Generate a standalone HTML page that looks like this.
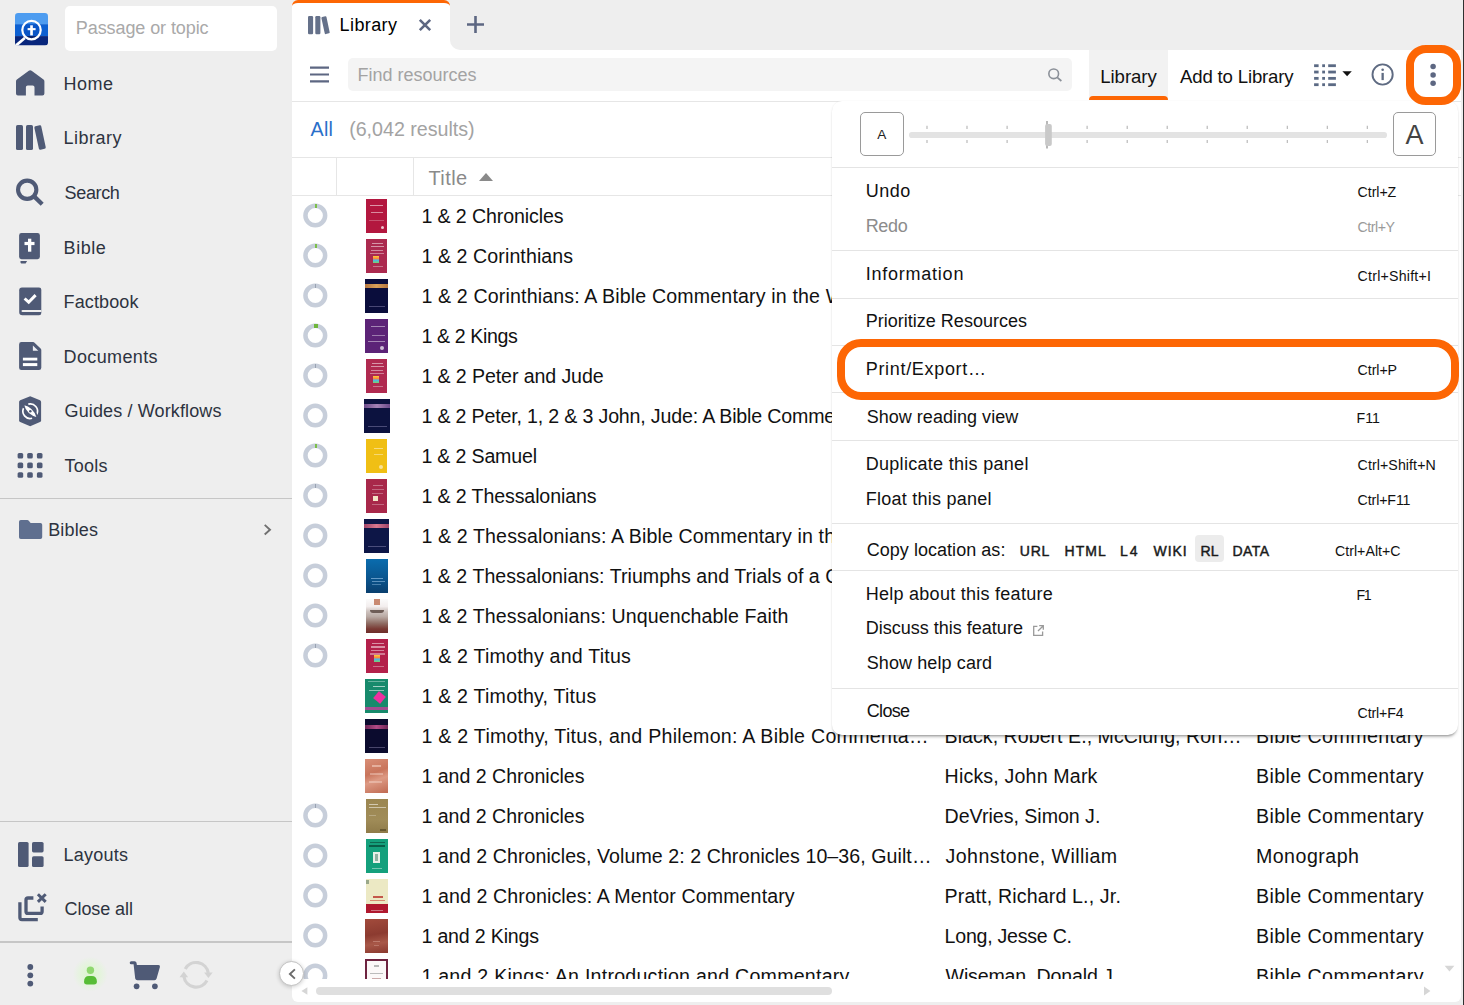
<!DOCTYPE html>
<html lang="en"><head><meta charset="utf-8"><title>Library</title>
<style>
html,body{margin:0;padding:0;}
body{width:1464px;height:1005px;overflow:hidden;background:#eeeeee;font-family:"Liberation Sans",sans-serif;position:relative;}
.a{position:absolute;}
.t{position:absolute;line-height:1;white-space:nowrap;}
svg{position:absolute;overflow:visible;}
.sep{position:absolute;height:1px;background:#e4e4e4;}
.ring{position:absolute;width:15.6px;height:15.6px;border:4.3px solid #c8cfda;border-radius:50%;}
.cv{position:absolute;overflow:hidden;}
.cv i{filter:blur(0.45px);}
</style></head><body>
<div class="a" id="sidebar" style="left:0;top:0;width:292px;height:1005px;background:#eeeeee"></div>
<svg style="left:15.1px;top:12.9px" width="33" height="32.4" viewBox="0 0 33 32.4">
<defs><clipPath id="lg"><rect x="0" y="0" width="33" height="32.4" rx="3.2"/></clipPath><clipPath id="lc"><circle cx="16.5" cy="17.1" r="9.2"/></clipPath></defs>
<g clip-path="url(#lg)">
<rect x="0" y="0" width="33" height="11.4" fill="#4d9cf0"/>
<rect x="0" y="11.2" width="33" height="12" fill="#0c60d2"/>
<rect x="0" y="23.1" width="33" height="9.4" fill="#08267c"/>
<g clip-path="url(#lc)"><rect x="0" y="0" width="33" height="11.4" fill="#2f82e2"/><rect x="0" y="11.2" width="33" height="12" fill="#0a55c6"/><rect x="0" y="23.1" width="33" height="9.4" fill="#061f6a"/></g>
<line x1="1.2" y1="32.4" x2="9.8" y2="24.9" stroke="#fff" stroke-width="2.7"/>
</g>
<circle cx="16.5" cy="17.1" r="9.2" fill="none" stroke="#fff" stroke-width="2.2"/>
<rect x="15.2" y="12.3" width="2.65" height="10.1" fill="#fff"/><rect x="12.6" y="15.1" width="8" height="2.1" fill="#fff"/>
</svg>
<div class="a" style="left:65px;top:6px;width:212px;height:45px;background:#fff;border-radius:5px"></div>
<span id="t0" class="t " style="left:75.80px;top:18.96px;font-size:18.00px;color:#a9a9a9;letter-spacing:-0.085px;">Passage or topic</span>
<span id="t1" class="t " style="left:63.60px;top:74.86px;font-size:18.00px;color:#2d3340;letter-spacing:0.499px;">Home</span>
<span id="t2" class="t " style="left:63.60px;top:129.42px;font-size:18.00px;color:#2d3340;letter-spacing:0.497px;">Library</span>
<span id="t3" class="t " style="left:64.60px;top:183.98px;font-size:18.00px;color:#2d3340;letter-spacing:-0.364px;">Search</span>
<span id="t4" class="t " style="left:63.60px;top:238.54px;font-size:18.00px;color:#2d3340;letter-spacing:0.546px;">Bible</span>
<span id="t5" class="t " style="left:63.60px;top:293.10px;font-size:18.00px;color:#2d3340;letter-spacing:0.109px;">Factbook</span>
<span id="t6" class="t " style="left:63.60px;top:347.66px;font-size:18.00px;color:#2d3340;letter-spacing:0.358px;">Documents</span>
<span id="t7" class="t " style="left:64.60px;top:402.22px;font-size:18.00px;color:#2d3340;letter-spacing:0.123px;">Guides / Workflows</span>
<span id="t8" class="t " style="left:64.60px;top:456.78px;font-size:18.00px;color:#2d3340;letter-spacing:0.245px;">Tools</span>
<svg style="left:16px;top:69px" width="29" height="27" viewBox="0 0 29 27"><path fill="#4f5a76" d="M15.6 1.7 L27.5 10.5 Q28.4 11.2 28.4 12.4 V24.6 Q28.4 26.6 26.4 26.6 H18.5 V18.2 Q18.5 16.4 16.7 16.4 H11.7 Q9.9 16.4 9.9 18.2 V26.6 H2 Q0 26.6 0 24.6 V12.4 Q0 11.2 0.9 10.5 L12.8 1.7 Q14.2 0.7 15.6 1.7 Z"/></svg>
<svg style="left:16px;top:125px" width="30.0" height="25.0" viewBox="0 0 30 25"><g fill="#4f5a76"><rect x="0" y="0" width="7" height="25" rx="1.6"/><rect x="10" y="0" width="7" height="25" rx="1.6"/><path d="M19.4 1.3 L23.6 0.3 Q25 0 25.3 1.4 L29.7 22.1 Q30 23.5 28.6 23.8 L24.6 24.8 Q23.2 25.1 22.9 23.7 L18.4 3 Q18.1 1.6 19.4 1.3 Z"/></g></svg>
<svg style="left:16px;top:178px" width="30" height="29" viewBox="0 0 30 29"><circle cx="11.2" cy="11.75" r="9.15" fill="none" stroke="#4f5a76" stroke-width="4.1"/><line x1="17.6" y1="17.9" x2="26.2" y2="26.3" stroke="#4f5a76" stroke-width="4.3"/></svg>
<svg style="left:19px;top:233px" width="21" height="31" viewBox="0 0 21 31"><rect x="0.1" y="0" width="20.8" height="26.2" rx="2.4" fill="#4f5a76"/><path d="M1.5 27.9 H8.1 L6.6 30.4 H2.3 Q1.5 30.4 1.5 29.6 Z" fill="#4f5a76"/><rect x="9" y="5.7" width="3.3" height="13" fill="#fff"/><rect x="5.5" y="8.9" width="10" height="3.2" fill="#fff"/></svg>
<svg style="left:19px;top:287px" width="23" height="29" viewBox="0 0 23 29"><path fill="#4f5a76" d="M3 0.4 H20 Q22.3 0.4 22.3 2.7 V26 Q22.3 28.3 20 28.3 H3.4 Q0.2 28.3 0.2 25.1 V3.2 Q0.2 0.4 3 0.4 Z"/><path d="M3.6 22.9 H22.3 V25.1 H3.6 Q2.5 25.1 2.5 24 Q2.5 22.9 3.6 22.9 Z" fill="#eee"/><path d="M5.6 11.5 L9.7 15.2 L16.6 8.1" fill="none" stroke="#fff" stroke-width="3"/></svg>
<svg style="left:19px;top:342px" width="23" height="29" viewBox="0 0 23 29"><path fill="#4f5a76" d="M2.4 0.1 H14 Q15 0.1 15.8 0.9 L21.6 6.4 Q22.3 7.1 22.3 8.1 V25.8 Q22.3 28.1 20 28.1 H2.4 Q0.1 28.1 0.1 25.8 V2.4 Q0.1 0.1 2.4 0.1 Z"/><path d="M13.9 3.6 V8.7 H19.3 Z" fill="#eceef3"/><rect x="3.9" y="15.7" width="14.4" height="2.8" fill="#fff"/><rect x="3.9" y="21.1" width="14.4" height="3" fill="#fff"/></svg>
<svg style="left:19px;top:395.5px" width="23" height="30.5" viewBox="0 0 23 30.5"><path fill="#4f5a76" d="M11.2 0.3 L21 4.3 Q22.1 4.8 22.1 6 V24.4 Q22.1 25.6 21 26.1 L11.2 30.3 L1.2 26.1 Q0.1 25.6 0.1 24.4 V6 Q0.1 4.8 1.2 4.3 Z"/>
<path d="M9.31 8.15 A7.3 7.3 0 0 1 17.82 18.29" fill="none" stroke="#fff" stroke-width="1.7"/>
<path d="M13.09 22.25 A7.3 7.3 0 0 1 4.58 12.11" fill="none" stroke="#fff" stroke-width="1.7"/>
<path d="M4 8 Q15.8 10.7 18.7 22.3 Q6.9 19.6 4 8 Z" fill="#fff" stroke="#4f5a76" stroke-width="1.5"/><circle cx="11.3" cy="15.2" r="1.25" fill="#4f5a76"/></svg>
<svg style="left:0;top:0" width="60" height="500" viewBox="0 0 60 500"><g fill="#4f5a76"><rect x="17.6" y="452.9" width="5.6" height="5.6" rx="1.5"/><rect x="17.6" y="462.6" width="5.6" height="5.6" rx="1.5"/><rect x="17.6" y="472.2" width="5.6" height="5.6" rx="1.5"/><rect x="27.2" y="452.9" width="5.6" height="5.6" rx="1.5"/><rect x="27.2" y="462.6" width="5.6" height="5.6" rx="1.5"/><rect x="27.2" y="472.2" width="5.6" height="5.6" rx="1.5"/><rect x="36.9" y="452.9" width="5.6" height="5.6" rx="1.5"/><rect x="36.9" y="462.6" width="5.6" height="5.6" rx="1.5"/><rect x="36.9" y="472.2" width="5.6" height="5.6" rx="1.5"/></g></svg>
<div class="a" style="left:0;top:497.8px;width:292px;height:1.4px;background:#c6c6c6"></div>
<svg style="left:19px;top:520px" width="24" height="19" viewBox="0 0 24 19"><path fill="#5f6f8f" d="M1.8 0 H8.2 Q9.3 0 10 0.9 L11.6 3 H21.4 Q23.2 3 23.2 4.8 V17.2 Q23.2 19 21.4 19 H1.8 Q0 19 0 17.2 V1.8 Q0 0 1.8 0 Z"/></svg>
<span id="t9" class="t " style="left:48.20px;top:521.06px;font-size:18.00px;color:#2d3340;letter-spacing:0.155px;">Bibles</span>
<svg style="left:262px;top:523px" width="10" height="13" viewBox="0 0 10 13"><path d="M2.7 1.9 L8 6.7 L2.7 11.5" fill="none" stroke="#707070" stroke-width="1.9"/></svg>
<div class="a" style="left:0;top:821px;width:292px;height:1px;background:#c6c6c6"></div>
<div class="a" style="left:0;top:941px;width:292px;height:2px;background:#c6c6c6"></div>
<svg style="left:17.6px;top:842.2px" width="26" height="25" viewBox="0 0 26 25"><g fill="#4f5a76"><rect x="0" y="0" width="10.6" height="25" rx="1.6"/><rect x="14" y="0" width="11.6" height="10.4" rx="1.6"/><rect x="14" y="14.2" width="11.6" height="10.8" rx="1.6"/></g></svg>
<span id="t10" class="t " style="left:63.60px;top:845.76px;font-size:18.00px;color:#2d3340;letter-spacing:0.226px;">Layouts</span>
<svg style="left:17.6px;top:893px" width="30" height="30" viewBox="0 0 30 30"><g fill="none" stroke="#4f5a76" stroke-width="3.3">
<path d="M1.9 9.2 V24.6 Q1.9 26.6 3.9 26.6 H19.8"/><path d="M15.4 5 H10 Q8 5 8 7 V18.4 Q8 20.4 10 20.4 H22.1 Q24.1 20.4 24.1 18.4 V13.6"/>
<path d="M19.9 1.3 L27.7 8.9 M27.7 1.3 L19.9 8.9" stroke-width="3"/></g></svg>
<span id="t11" class="t " style="left:64.60px;top:900.36px;font-size:18.00px;color:#2d3340;letter-spacing:-0.091px;">Close all</span>
<svg style="left:0;top:950px" width="292" height="50" viewBox="0 950 292 50">
<defs><radialGradient id="gl"><stop offset="0" stop-color="#dcf5cf"/><stop offset="0.55" stop-color="#e4f4dc"/><stop offset="1" stop-color="#eeeeee"/></radialGradient></defs>
<g fill="#4f5a76"><circle cx="30.3" cy="967" r="2.9"/><circle cx="30.3" cy="975.3" r="2.9"/><circle cx="30.3" cy="983.6" r="2.9"/></g>
<circle cx="90.4" cy="974.2" r="17.5" fill="url(#gl)"/>
<circle cx="90.4" cy="970.3" r="3.7" fill="#8fd86f"/>
<path d="M84 981.8 Q84 976.1 89 976.1 H91.8 Q96.9 976.1 96.9 981.8 Q96.9 984.5 94 984.5 H86.9 Q84 984.5 84 981.8 Z" fill="#57bd36"/>
<g fill="#4f5a76"><path d="M129.7 962.7 Q129.7 961.2 131.2 961.2 H134.6 Q136.2 961.2 136.5 962.8 L136.9 965.1 H158.4 Q160.4 965.1 159.9 967 L156.6 978.6 Q156.1 980.2 154.5 980.2 H137.4 Q135.6 980.2 135.2 978.4 L133.6 964.2 H131.2 Q129.7 964.2 129.7 962.7 Z"/>
<circle cx="136.6" cy="986.3" r="2.85"/><circle cx="154.9" cy="986.3" r="2.85"/></g>
<g fill="none" stroke="#d3d3d3" stroke-width="3.2"><path d="M185.24 969.03 A12.3 12.3 0 0 1 208.28 973.09"/><path d="M206.96 980.57 A12.3 12.3 0 0 1 183.92 976.51"/></g>
<path d="M204.10 972.40 l8.6 0 l-4.3 5.6 Z" fill="#d3d3d3"/><path d="M188.10 977.20 l-8.6 0 l4.3 -5.6 Z" fill="#d3d3d3"/>
</svg>
<div class="a" id="panel" style="left:292px;top:0;width:1169px;height:1001.5px;background:#fff;border-radius:0 0 6px 6px"></div>
<div class="a" style="left:450px;top:0;width:1014px;height:49.7px;background:#eeeeee;border-bottom-left-radius:10px"></div>
<div class="a" style="left:292px;top:0;width:158px;height:12px;background:#eeeeee"></div>
<div class="a" style="left:292px;top:0;width:157.6px;height:45px;background:#fff;border-top:3.8px solid #fd6604;border-radius:6px 6px 0 0"></div>
<svg style="left:307.8px;top:16.2px" width="21.9" height="18.25" viewBox="0 0 30 25"><g fill="#65718a"><rect x="0" y="0" width="7" height="25" rx="1.6"/><rect x="10" y="0" width="7" height="25" rx="1.6"/><path d="M19.4 1.3 L23.6 0.3 Q25 0 25.3 1.4 L29.7 22.1 Q30 23.5 28.6 23.8 L24.6 24.8 Q23.2 25.1 22.9 23.7 L18.4 3 Q18.1 1.6 19.4 1.3 Z"/></g></svg>
<span id="t12" class="t " style="left:339.60px;top:16.16px;font-size:18.00px;color:#000;letter-spacing:0.397px;">Library</span>
<svg style="left:419px;top:18.8px" width="12" height="12" viewBox="0 0 12 12"><path d="M0.8 0.8 L11.2 11.2 M11.2 0.8 L0.8 11.2" stroke="#5d6782" stroke-width="2.6"/></svg>
<svg style="left:467px;top:16.1px" width="17" height="17" viewBox="0 0 17 17"><path d="M8.5 0 V17 M0 8.5 H17" stroke="#5d6782" stroke-width="2.6"/></svg>
<svg style="left:310px;top:66px" width="19" height="17" viewBox="0 0 19 17"><path d="M0 1.6 H19 M0 8.5 H19 M0 15.4 H19" stroke="#5d6782" stroke-width="2.2"/></svg>
<div class="a" style="left:348px;top:58.3px;width:723.8px;height:32.9px;background:#f4f4f4;border-radius:5px"></div>
<span id="t13" class="t " style="left:357.40px;top:65.66px;font-size:18.00px;color:#a3a3a3;letter-spacing:0.012px;">Find resources</span>
<svg style="left:1047px;top:67px" width="16" height="16" viewBox="1047 67 16 16"><circle cx="1053.7" cy="73.8" r="4.85" fill="none" stroke="#8b9098" stroke-width="1.6"/><path d="M1057.2 77.3 L1061.4 81" stroke="#8b9098" stroke-width="1.7"/></svg>
<div class="a" style="left:1089px;top:49.6px;width:79px;height:50.4px;background:#f2f2f2"></div>
<div class="a" style="left:1089px;top:95.9px;width:79px;height:4.1px;background:#fd6604;border-radius:4px 4px 0 0"></div>
<span id="t14" class="t " style="left:1100.20px;top:67.56px;font-size:18.60px;color:#111;letter-spacing:-0.040px;">Library</span>
<span id="t15" class="t " style="left:1180.00px;top:67.56px;font-size:18.60px;color:#111;letter-spacing:-0.166px;">Add to Library</span>
<svg style="left:0;top:0" width="1464" height="100" viewBox="0 0 1464 100"><g fill="#5b6a84"><rect x="1314.1" y="64.30" width="4.5" height="2.8"/><rect x="1322.2" y="64.30" width="2.8" height="2.8"/><rect x="1328.2" y="64.30" width="7.7" height="2.8"/><rect x="1314.1" y="70.63" width="4.5" height="2.8"/><rect x="1322.2" y="70.63" width="2.8" height="2.8"/><rect x="1328.2" y="70.63" width="7.7" height="2.8"/><rect x="1314.1" y="76.96" width="4.5" height="2.8"/><rect x="1322.2" y="76.96" width="2.8" height="2.8"/><rect x="1328.2" y="76.96" width="7.7" height="2.8"/><rect x="1314.1" y="83.29" width="4.5" height="2.8"/><rect x="1322.2" y="83.29" width="2.8" height="2.8"/><rect x="1328.2" y="83.29" width="7.7" height="2.8"/></g><path d="M1342.4 71.2 H1351.8 L1347.1 76.2 Z" fill="#111"/><circle cx="1382.6" cy="74.5" r="10.1" fill="none" stroke="#5f6b82" stroke-width="1.9"/><rect x="1381.5" y="72.9" width="2.3" height="7.2" fill="#5f6b82"/><circle cx="1382.65" cy="69.7" r="1.3" fill="#5f6b82"/></svg>
<div class="sep" style="left:292px;top:101px;width:1169px;background:#e6e6e6"></div>
<span id="t16" class="t " style="left:310.60px;top:119.52px;font-size:19.70px;color:#2a6fc9;letter-spacing:0.197px;">All</span>
<span id="t17" class="t " style="left:349.20px;top:119.52px;font-size:19.70px;color:#a3a3a3;letter-spacing:-0.034px;">(6,042 results)</span>
<div class="sep" style="left:292px;top:157px;width:1169px;background:#e6e6e6"></div>
<div class="a" style="left:336px;top:158px;width:1px;height:37px;background:#e6e6e6"></div>
<div class="a" style="left:413px;top:158px;width:1px;height:37px;background:#e6e6e6"></div>
<span id="t18" class="t " style="left:428.40px;top:168.07px;font-size:20.00px;color:#8a8a8a;letter-spacing:0.421px;">Title</span>
<svg style="left:478.6px;top:173px" width="14" height="8" viewBox="0 0 14 8"><path d="M7 0 L14 8 H0 Z" fill="#8a8a8a"/></svg>
<div class="sep" style="left:292px;top:195px;width:1169px;background:#e6e6e6"></div>
<div class="a" id="list" style="left:292px;top:196px;width:1169px;height:783px;overflow:hidden"><div class="a" style="left:-292px;top:-196px;width:1464px;height:1005px">
<svg style="left:302px;top:201.70px" width="27" height="27" viewBox="0 0 27 27"><circle cx="13.3" cy="13.5" r="9.85" fill="none" stroke="#c7ceda" stroke-width="4.5"/></svg>
<i class="a" style="left:314.6px;top:203.8px;width:2px;height:4.2px;background:#7cbf4a"></i>
<div class="cv" style="left:366.3px;top:198.6px;width:21.2px;height:34px;background:#b3173f"><i class="a" style="left:4px;right:4px;top:6px;height:1.2px;background:rgba(255,255,255,.55);"></i><i class="a" style="left:5px;right:4px;top:13px;height:1.2px;background:rgba(255,255,255,.5);"></i><i class="a" style="left:3px;right:3px;top:21px;height:0.8px;background:rgba(255,255,255,.25);"></i><i class="a" style="right:3px;bottom:3.5px;width:3.5px;height:3.5px;border-radius:50%;background:rgba(255,255,255,.75)"></i></div>
<span id="t19" class="t " style="left:421.40px;top:206.76px;font-size:19.60px;color:#111;letter-spacing:-0.111px;">1 &amp; 2 Chronicles</span>
<svg style="left:302px;top:241.73px" width="27" height="27" viewBox="0 0 27 27"><circle cx="13.3" cy="13.5" r="9.85" fill="none" stroke="#c7ceda" stroke-width="4.5"/></svg>
<i class="a" style="left:314.6px;top:243.8px;width:2px;height:4.2px;background:#7cbf4a"></i>
<div class="cv" style="left:366.3px;top:238.6px;width:21.2px;height:34px;background:#ab2a4f"><i class="a" style="left:6px;right:4px;top:4px;height:1.2px;background:rgba(255,255,255,.5);"></i><i class="a" style="left:5px;right:3px;top:7.5px;height:1.2px;background:rgba(255,255,255,.5);"></i><i class="a" style="left:5px;right:4px;top:11px;height:1.2px;background:rgba(255,255,255,.45);"></i><i class="a" style="left:4px;right:3px;top:14.5px;height:1.2px;background:rgba(255,255,255,.4);"></i><i class="a" style="left:7px;top:17px;width:6px;height:7px;background:linear-gradient(#f7d038,#ff8a3c 35%,#4db4e8 60%,#7cd36a)"></i><i class="a" style="left:7px;right:4px;top:27px;height:1px;background:rgba(255,255,255,.35);"></i></div>
<span id="t20" class="t " style="left:421.40px;top:246.79px;font-size:19.60px;color:#111;letter-spacing:0.087px;">1 &amp; 2 Corinthians</span>
<svg style="left:302px;top:281.76px" width="27" height="27" viewBox="0 0 27 27"><circle cx="13.3" cy="13.5" r="9.85" fill="none" stroke="#c7ceda" stroke-width="4.5"/></svg>
<i class="a" style="left:315px;top:283.9px;width:1px;height:4px;background:#9aa3b2"></i>
<div class="cv" style="left:365.3px;top:278.7px;width:23.2px;height:34px;background:#0a0d3c"><i class="a" style="left:0px;right:0px;top:5.5px;height:4px;background:linear-gradient(90deg,#b5763f,#d9a05a,#b5763f);"></i><i class="a" style="left:4px;right:3px;top:27.5px;height:0.8px;background:rgba(190,180,220,.35);"></i></div>
<span id="t21" class="t " style="left:421.40px;top:286.82px;font-size:19.60px;color:#111;letter-spacing:0.150px;">1 &amp; 2 Corinthians: A Bible Commentary in the Wesleyan Tradition</span>
<svg style="left:302px;top:321.79px" width="27" height="27" viewBox="0 0 27 27"><circle cx="13.3" cy="13.5" r="9.85" fill="none" stroke="#c7ceda" stroke-width="4.5"/></svg>
<i class="a" style="left:314.3px;top:323.9px;width:3.4px;height:4.3px;background:#6fb63c"></i>
<div class="cv" style="left:365.3px;top:318.7px;width:23.2px;height:34px;background:#5c2377"><i class="a" style="left:6px;right:3px;top:7.5px;height:1.2px;background:rgba(255,255,255,.45);"></i><i class="a" style="left:7px;right:3px;top:16px;height:1.2px;background:rgba(255,255,255,.4);"></i><i class="a" style="left:3px;right:3px;top:22px;height:1.4px;background:rgba(255,255,255,.45);"></i><i class="a" style="right:4px;bottom:3px;width:4px;height:4px;border-radius:50%;background:rgba(255,255,255,.7)"></i></div>
<span id="t22" class="t " style="left:421.40px;top:326.85px;font-size:19.60px;color:#111;letter-spacing:-0.381px;">1 &amp; 2 Kings</span>
<svg style="left:302px;top:361.82px" width="27" height="27" viewBox="0 0 27 27"><circle cx="13.3" cy="13.5" r="9.85" fill="none" stroke="#c7ceda" stroke-width="4.5"/></svg>
<i class="a" style="left:315px;top:363.9px;width:1px;height:4px;background:#9aa3b2"></i>
<div class="cv" style="left:366.3px;top:358.7px;width:21.2px;height:34px;background:#b02a50"><i class="a" style="left:6px;right:4px;top:4px;height:1.2px;background:rgba(255,255,255,.5);"></i><i class="a" style="left:5px;right:3px;top:7.5px;height:1.2px;background:rgba(255,255,255,.5);"></i><i class="a" style="left:5px;right:4px;top:11px;height:1.2px;background:rgba(255,255,255,.45);"></i><i class="a" style="left:4px;right:3px;top:14.5px;height:1.2px;background:rgba(255,255,255,.4);"></i><i class="a" style="left:7px;top:17px;width:6px;height:7px;background:linear-gradient(#f7d038,#ff8a3c 35%,#4db4e8 60%,#7cd36a)"></i><i class="a" style="left:7px;right:4px;top:27px;height:1px;background:rgba(255,255,255,.35);"></i></div>
<span id="t23" class="t " style="left:421.40px;top:366.88px;font-size:19.60px;color:#111;letter-spacing:-0.100px;">1 &amp; 2 Peter and Jude</span>
<svg style="left:302px;top:401.85px" width="27" height="27" viewBox="0 0 27 27"><circle cx="13.3" cy="13.5" r="9.85" fill="none" stroke="#c7ceda" stroke-width="4.5"/></svg>
<div class="cv" style="left:363.8px;top:398.8px;width:26.2px;height:34px;background:#0c123f"><i class="a" style="left:0px;right:0px;top:5.5px;height:4px;background:linear-gradient(90deg,#6b4a8a,#a583b5,#6b4a8a);"></i><i class="a" style="left:4px;right:3px;top:27.5px;height:0.8px;background:rgba(190,180,220,.35);"></i></div>
<span id="t24" class="t " style="left:421.40px;top:406.91px;font-size:19.60px;color:#111;letter-spacing:-0.168px;">1 &amp; 2 Peter, 1, 2 &amp; 3 John, Jude: A Bible Commentary in the Wesleyan Tradition</span>
<svg style="left:302px;top:441.88px" width="27" height="27" viewBox="0 0 27 27"><circle cx="13.3" cy="13.5" r="9.85" fill="none" stroke="#c7ceda" stroke-width="4.5"/></svg>
<i class="a" style="left:314.6px;top:444.0px;width:2px;height:4.2px;background:#7cbf4a"></i>
<div class="cv" style="left:366.3px;top:438.8px;width:21.2px;height:34px;background:#f0bf14"><i class="a" style="left:8px;right:4px;top:9px;height:1px;background:rgba(255,255,255,.45);"></i><i class="a" style="left:8px;right:4px;top:15px;height:1px;background:rgba(255,255,255,.4);"></i><i class="a" style="right:4px;bottom:4px;width:4px;height:4px;border-radius:50%;background:rgba(255,255,255,.55)"></i></div>
<span id="t25" class="t " style="left:421.40px;top:446.94px;font-size:19.60px;color:#111;letter-spacing:-0.180px;">1 &amp; 2 Samuel</span>
<svg style="left:302px;top:481.91px" width="27" height="27" viewBox="0 0 27 27"><circle cx="13.3" cy="13.5" r="9.85" fill="none" stroke="#c7ceda" stroke-width="4.5"/></svg>
<i class="a" style="left:315px;top:484.0px;width:1px;height:4px;background:#9aa3b2"></i>
<div class="cv" style="left:366.3px;top:478.8px;width:21.2px;height:34px;background:#a8284a"><i class="a" style="left:7px;right:4px;top:6px;height:1.2px;background:rgba(255,255,255,.35);"></i><i class="a" style="left:6px;right:3px;top:10px;height:1.2px;background:rgba(255,255,255,.3);"></i><i class="a" style="left:6px;right:4px;top:14px;height:1.2px;background:rgba(255,255,255,.3);"></i><i class="a" style="left:7px;top:17px;width:5px;height:5px;background:#f3e6c8"></i><i class="a" style="left:6px;right:3px;top:25px;height:1px;background:rgba(255,255,255,.3);"></i></div>
<span id="t26" class="t " style="left:421.40px;top:486.97px;font-size:19.60px;color:#111;letter-spacing:-0.113px;">1 &amp; 2 Thessalonians</span>
<svg style="left:302px;top:521.94px" width="27" height="27" viewBox="0 0 27 27"><circle cx="13.3" cy="13.5" r="9.85" fill="none" stroke="#c7ceda" stroke-width="4.5"/></svg>
<div class="cv" style="left:364.3px;top:518.8px;width:25.2px;height:34px;background:#0d1647"><i class="a" style="left:0px;right:0px;top:5.5px;height:4px;background:linear-gradient(90deg,#a04468,#d9788f,#a04468);"></i><i class="a" style="left:4px;right:3px;top:27.5px;height:0.8px;background:rgba(190,180,220,.35);"></i></div>
<span id="t27" class="t " style="left:421.40px;top:527.00px;font-size:19.60px;color:#111;letter-spacing:0.127px;">1 &amp; 2 Thessalonians: A Bible Commentary in the Wesleyan Tradition</span>
<svg style="left:302px;top:561.97px" width="27" height="27" viewBox="0 0 27 27"><circle cx="13.3" cy="13.5" r="9.85" fill="none" stroke="#c7ceda" stroke-width="4.5"/></svg>
<div class="cv" style="left:366.1px;top:558.9px;width:21.6px;height:34px;background:linear-gradient(#0a6cae,#0a568f 55%,#093f6e)"><i class="a" style="left:5px;right:5px;top:19px;height:1px;background:rgba(190,225,255,.5);"></i><i class="a" style="left:6px;right:3px;top:22px;height:1px;background:rgba(190,225,255,.45);"></i><i class="a" style="left:6px;right:7px;top:25px;height:1px;background:rgba(190,225,255,.35);"></i></div>
<span id="t28" class="t " style="left:421.40px;top:567.03px;font-size:19.60px;color:#111;letter-spacing:0.027px;">1 &amp; 2 Thessalonians: Triumphs and Trials of a Consecrated Church</span>
<svg style="left:302px;top:602.00px" width="27" height="27" viewBox="0 0 27 27"><circle cx="13.3" cy="13.5" r="9.85" fill="none" stroke="#c7ceda" stroke-width="4.5"/></svg>
<div class="cv" style="left:366.1px;top:598.9px;width:21.6px;height:34px;background:linear-gradient(#fbfbfb 0,#f3eeee 22%,#cfc4c0 36%,#b9aaa4 52%,#8e6b62 72%,#7a3a34 88%,#6e2d2a)"><i class="a" style="left:8px;top:0;width:6px;height:6px;background:#c98a72"></i><i class="a" style="left:4px;right:4px;top:11px;height:3px;background:#6e5d57;border-radius:0 0 6px 6px"></i></div>
<span id="t29" class="t " style="left:421.40px;top:607.06px;font-size:19.60px;color:#111;letter-spacing:0.095px;">1 &amp; 2 Thessalonians: Unquenchable Faith</span>
<svg style="left:302px;top:642.03px" width="27" height="27" viewBox="0 0 27 27"><circle cx="13.3" cy="13.5" r="9.85" fill="none" stroke="#c7ceda" stroke-width="4.5"/></svg>
<i class="a" style="left:315px;top:644.1px;width:1px;height:4px;background:#9aa3b2"></i>
<div class="cv" style="left:366.1px;top:638.9px;width:21.6px;height:34px;background:#b3204a"><i class="a" style="left:6px;right:4px;top:4px;height:1.2px;background:rgba(255,255,255,.5);"></i><i class="a" style="left:5px;right:3px;top:7.5px;height:1.2px;background:rgba(255,255,255,.5);"></i><i class="a" style="left:5px;right:4px;top:11px;height:1.2px;background:rgba(255,255,255,.45);"></i><i class="a" style="left:4px;right:3px;top:14.5px;height:1.2px;background:rgba(255,255,255,.4);"></i><i class="a" style="left:8px;top:16px;width:6px;height:7px;background:linear-gradient(#f7d038,#ff8a3c 35%,#4db4e8 60%,#7cd36a)"></i><i class="a" style="left:7px;right:4px;top:27px;height:1px;background:rgba(255,255,255,.35);"></i></div>
<span id="t30" class="t " style="left:421.40px;top:647.09px;font-size:19.60px;color:#111;letter-spacing:0.211px;">1 &amp; 2 Timothy and Titus</span>
<div class="cv" style="left:365.3px;top:679.0px;width:23.2px;height:34px;background:#178a6c"><i class="a" style="left:3px;right:3px;top:2px;height:1px;background:rgba(255,255,255,.35);"></i><i class="a" style="left:8px;right:3px;top:7px;height:1.3px;background:rgba(255,255,255,.6);"></i><i class="a" style="left:4px;right:4px;top:11px;height:1.3px;background:rgba(255,255,255,.5);"></i><i class="a" style="left:10px;top:14px;width:9px;height:9px;background:#ef2fa0;transform:rotate(40deg)"></i><i class="a" style="left:0px;right:0px;top:28px;height:3px;background:#c4409a;opacity:.8"></i></div>
<span id="t31" class="t " style="left:421.40px;top:687.12px;font-size:19.60px;color:#111;letter-spacing:0.220px;">1 &amp; 2 Timothy, Titus</span>
<div class="cv" style="left:365.3px;top:719.0px;width:23.2px;height:34px;background:#0b0b2e"><i class="a" style="left:0px;right:0px;top:5.5px;height:4px;background:linear-gradient(90deg,#6e2656,#b04a86,#6e2656);"></i><i class="a" style="left:4px;right:3px;top:27.5px;height:0.8px;background:rgba(190,180,220,.35);"></i></div>
<span id="t32" class="t " style="left:421.40px;top:727.15px;font-size:19.60px;color:#111;letter-spacing:0.274px;">1 &amp; 2 Timothy, Titus, and Philemon: A Bible Commenta…</span>
<span id="t33" class="t " style="left:944.60px;top:727.15px;font-size:19.60px;color:#111;letter-spacing:0.030px;">Black, Robert E.; McClung, Ron…</span>
<span id="t34" class="t " style="left:1255.90px;top:727.15px;font-size:19.60px;color:#111;letter-spacing:0.429px;">Bible Commentary</span>
<div class="cv" style="left:365.3px;top:759.0px;width:23.2px;height:34px;background:linear-gradient(160deg,#d98f77,#c9755c 40%,#dd9a84 60%,#c06a52)"><i class="a" style="left:7px;right:7px;top:6px;height:2px;background:rgba(255,235,225,.45);"></i><i class="a" style="left:5px;right:5px;top:14px;height:1.5px;background:rgba(255,235,225,.35);"></i><i class="a" style="left:4px;right:6px;top:22px;height:1.5px;background:rgba(255,235,225,.35);"></i></div>
<span id="t35" class="t " style="left:421.40px;top:767.18px;font-size:19.60px;color:#111;letter-spacing:-0.017px;">1 and 2 Chronicles</span>
<span id="t36" class="t " style="left:944.60px;top:767.18px;font-size:19.60px;color:#111;letter-spacing:0.170px;">Hicks, John Mark</span>
<span id="t37" class="t " style="left:1255.90px;top:767.18px;font-size:19.60px;color:#111;letter-spacing:0.429px;">Bible Commentary</span>
<svg style="left:302px;top:802.15px" width="27" height="27" viewBox="0 0 27 27"><circle cx="13.3" cy="13.5" r="9.85" fill="none" stroke="#c7ceda" stroke-width="4.5"/></svg>
<i class="a" style="left:315px;top:804.3px;width:1px;height:4px;background:#9aa3b2"></i>
<div class="cv" style="left:366.1px;top:799.1px;width:21.6px;height:34px;background:linear-gradient(#9b8651,#a08c58 60%,#8f7b49)"><i class="a" style="left:3px;right:10px;top:4.5px;height:1.2px;background:rgba(255,255,255,.55);"></i><i class="a" style="left:3px;right:2px;top:8px;height:1.2px;background:rgba(255,255,255,.5);"></i><i class="a" style="left:3px;right:12px;top:16px;height:0.8px;background:rgba(255,255,255,.25);"></i><i class="a" style="left:14px;right:2px;top:30px;height:1.5px;background:rgba(60,50,20,.5);"></i></div>
<span id="t38" class="t " style="left:421.40px;top:807.21px;font-size:19.60px;color:#111;letter-spacing:-0.017px;">1 and 2 Chronicles</span>
<span id="t39" class="t " style="left:944.60px;top:807.21px;font-size:19.60px;color:#111;letter-spacing:-0.020px;">DeVries, Simon J.</span>
<span id="t40" class="t " style="left:1255.90px;top:807.21px;font-size:19.60px;color:#111;letter-spacing:0.429px;">Bible Commentary</span>
<svg style="left:302px;top:842.18px" width="27" height="27" viewBox="0 0 27 27"><circle cx="13.3" cy="13.5" r="9.85" fill="none" stroke="#c7ceda" stroke-width="4.5"/></svg>
<div class="cv" style="left:366.1px;top:839.1px;width:21.6px;height:34px;background:#14a07c"><i class="a" style="left:4px;right:3px;top:3px;height:1px;background:rgba(0,0,0,.35);"></i><i class="a" style="left:3px;right:3px;top:6px;height:1.6px;background:rgba(0,40,30,.55);"></i><i class="a" style="left:7px;top:13px;width:7px;height:11px;background:#e8efe8"></i><i class="a" style="left:9px;top:15px;width:3px;height:7px;background:#8fb0a0"></i><i class="a" style="left:6px;right:6px;top:29px;height:0.8px;background:rgba(255,255,255,.4);"></i></div>
<span id="t41" class="t " style="left:421.40px;top:847.24px;font-size:19.60px;color:#111;letter-spacing:0.066px;">1 and 2 Chronicles, Volume 2: 2 Chronicles 10–36, Guilt…</span>
<span id="t42" class="t " style="left:945.60px;top:847.24px;font-size:19.60px;color:#111;letter-spacing:0.417px;">Johnstone, William</span>
<span id="t43" class="t " style="left:1255.90px;top:847.24px;font-size:19.60px;color:#111;letter-spacing:0.496px;">Monograph</span>
<svg style="left:302px;top:882.21px" width="27" height="27" viewBox="0 0 27 27"><circle cx="13.3" cy="13.5" r="9.85" fill="none" stroke="#c7ceda" stroke-width="4.5"/></svg>
<div class="cv" style="left:366.1px;top:879.1px;width:21.6px;height:34px;background:#ece9c4"><i class="a" style="left:0;top:1px;width:3px;height:4px;background:#9aa88a"></i><i class="a" style="left:7px;right:5px;top:17px;height:1.6px;background:#c4584a;"></i><i class="a" style="left:4px;right:3px;top:21px;height:1px;background:#d88a70;"></i><i class="a" style="left:0px;right:0px;top:24.5px;height:9.5px;background:#b0182e;"></i><i class="a" style="left:5px;right:5px;top:31px;height:0.8px;background:rgba(255,255,255,.4);"></i></div>
<span id="t44" class="t " style="left:421.40px;top:887.27px;font-size:19.60px;color:#111;letter-spacing:0.106px;">1 and 2 Chronicles: A Mentor Commentary</span>
<span id="t45" class="t " style="left:944.60px;top:887.27px;font-size:19.60px;color:#111;letter-spacing:0.148px;">Pratt, Richard L., Jr.</span>
<span id="t46" class="t " style="left:1255.90px;top:887.27px;font-size:19.60px;color:#111;letter-spacing:0.429px;">Bible Commentary</span>
<svg style="left:302px;top:922.24px" width="27" height="27" viewBox="0 0 27 27"><circle cx="13.3" cy="13.5" r="9.85" fill="none" stroke="#c7ceda" stroke-width="4.5"/></svg>
<div class="cv" style="left:365.3px;top:919.1px;width:23.2px;height:34px;background:linear-gradient(170deg,#a24b3c,#8c3b30 45%,#a85848 70%,#8a382e)"><i class="a" style="left:8px;right:8px;top:22px;height:1.2px;background:rgba(255,220,210,.3);"></i><i class="a" style="left:9px;right:9px;top:26px;height:1.2px;background:rgba(255,220,210,.25);"></i></div>
<span id="t47" class="t " style="left:421.40px;top:927.30px;font-size:19.60px;color:#111;letter-spacing:-0.178px;">1 and 2 Kings</span>
<span id="t48" class="t " style="left:944.60px;top:927.30px;font-size:19.60px;color:#111;letter-spacing:-0.250px;">Long, Jesse C.</span>
<span id="t49" class="t " style="left:1255.90px;top:927.30px;font-size:19.60px;color:#111;letter-spacing:0.429px;">Bible Commentary</span>
<svg style="left:302px;top:962.27px" width="27" height="27" viewBox="0 0 27 27"><circle cx="13.3" cy="13.5" r="9.85" fill="none" stroke="#c7ceda" stroke-width="4.5"/></svg>
<div class="cv" style="left:365.3px;top:959.2px;width:23.2px;height:34px;background:#fbf8f8"><i class="a" style="left:0;top:0;right:0;bottom:0;border:2px solid #6e2340;box-sizing:border-box"></i><i class="a" style="left:9px;right:9px;top:6px;height:2px;background:#b8b8b8;"></i><i class="a" style="left:5px;right:5px;top:14px;height:0.8px;background:#bbb;"></i><i class="a" style="left:7px;right:7px;top:19px;height:0.8px;background:#caa;"></i></div>
<span id="t50" class="t " style="left:421.40px;top:967.33px;font-size:19.60px;color:#111;letter-spacing:0.247px;">1 and 2 Kings: An Introduction and Commentary</span>
<span id="t51" class="t " style="left:945.60px;top:967.33px;font-size:19.60px;color:#111;letter-spacing:-0.169px;">Wiseman, Donald J.</span>
<span id="t52" class="t " style="left:1255.90px;top:967.33px;font-size:19.60px;color:#111;letter-spacing:0.429px;">Bible Commentary</span>
</div></div>
<div class="a" style="left:315.5px;top:987px;width:516.5px;height:8px;border-radius:4px;background:#dfdfdf"></div>
<svg style="left:0;top:0" width="1464" height="1005" viewBox="0 0 1464 1005"><g fill="#d6d6d6"><path d="M301.4 991 L307.4 987.2 V994.8 Z"/><path d="M1430.4 991 L1424 986.4 V995.6 Z"/><path d="M1444.6 965.8 H1454.4 L1449.5 971.4 Z"/></g></svg>
<div class="a" style="left:278.7px;top:961px;width:25px;height:25px;border-radius:50%;background:#fff;border:1px solid #c2c2c2;box-sizing:border-box;box-shadow:0 1px 4px rgba(0,0,0,.2)"></div>
<svg style="left:287.6px;top:967.6px" width="9" height="12" viewBox="0 0 9 12"><path d="M6.9 1.4 L1.9 6 L6.9 10.6" fill="none" stroke="#6a6a6a" stroke-width="1.9"/></svg>
<div class="a" style="left:1462.5px;top:0;width:1.5px;height:1005px;background:#303030"></div>
<div class="a" id="menu" style="left:832px;top:101px;width:625.5px;height:634px;background:#fff;border-radius:10px;box-shadow:0 3px 3.5px -2px rgba(0,0,0,.5),0 0 1.5px rgba(0,0,0,.08)"></div>
<div class="a" style="left:860.4px;top:112.4px;width:43.2px;height:43.2px;border:1px solid #9a9a9a;border-radius:5px;box-sizing:border-box;background:#fff"></div>
<span id="t53" class="t " style="left:877.20px;top:127.89px;font-size:13.60px;color:#222;">A</span>
<div class="a" style="left:1392.6px;top:112.4px;width:43.2px;height:43.2px;border:1px solid #9a9a9a;border-radius:5px;box-sizing:border-box;background:#fff"></div>
<span id="t54" class="t " style="left:1405.60px;top:121.54px;font-size:27.00px;color:#444;">A</span>
<div class="a" style="left:909px;top:132.2px;width:477.5px;height:5.6px;border-radius:2.8px;background:#e3e3e3"></div>
<svg style="left:0;top:0" width="1464" height="170" viewBox="0 0 1464 170"><g stroke="#b4b4b4" stroke-width="1.1"><path d="M927.0 125.8 V129 M927.0 140 V142.9" /><path d="M967.0 125.8 V129 M967.0 140 V142.9" /><path d="M1007.1 125.8 V129 M1007.1 140 V142.9" /><path d="M1087.1 125.8 V129 M1087.1 140 V142.9" /><path d="M1127.2 125.8 V129 M1127.2 140 V142.9" /><path d="M1167.2 125.8 V129 M1167.2 140 V142.9" /><path d="M1207.2 125.8 V129 M1207.2 140 V142.9" /><path d="M1247.2 125.8 V129 M1247.2 140 V142.9" /><path d="M1287.3 125.8 V129 M1287.3 140 V142.9" /><path d="M1327.3 125.8 V129 M1327.3 140 V142.9" /><path d="M1367.3 125.8 V129 M1367.3 140 V142.9" /></g><path d="M1047 121 V148.6" stroke="#b2b2b2" stroke-width="1.8"/><rect x="1045.1" y="124" width="6.7" height="22" rx="2" fill="#c9c9c9"/></svg>
<div class="sep" style="left:832px;top:167.0px;width:625.5px"></div>
<div class="sep" style="left:832px;top:250.0px;width:625.5px"></div>
<div class="sep" style="left:832px;top:297.5px;width:625.5px"></div>
<div class="sep" style="left:832px;top:345.0px;width:625.5px"></div>
<div class="sep" style="left:832px;top:392.0px;width:625.5px"></div>
<div class="sep" style="left:832px;top:440.0px;width:625.5px"></div>
<div class="sep" style="left:832px;top:522.9px;width:625.5px"></div>
<div class="sep" style="left:832px;top:569.9px;width:625.5px"></div>
<div class="sep" style="left:832px;top:687.9px;width:625.5px"></div>
<span id="t55" class="t " style="left:865.70px;top:181.96px;font-size:18.00px;color:#111;letter-spacing:0.493px;">Undo</span>
<span id="t56" class="t " style="left:1357.60px;top:185.18px;font-size:14.20px;color:#111;letter-spacing:-0.070px;">Ctrl+Z</span>
<span id="t57" class="t " style="left:865.70px;top:216.76px;font-size:18.00px;color:#8c8c8c;letter-spacing:-0.340px;">Redo</span>
<span id="t58" class="t " style="left:1357.60px;top:219.98px;font-size:14.20px;color:#9a9a9a;letter-spacing:-0.490px;">Ctrl+Y</span>
<span id="t59" class="t " style="left:865.70px;top:265.36px;font-size:18.00px;color:#111;letter-spacing:0.767px;">Information</span>
<span id="t60" class="t " style="left:1357.60px;top:268.58px;font-size:14.20px;color:#111;letter-spacing:0.216px;">Ctrl+Shift+I</span>
<span id="t61" class="t " style="left:865.70px;top:312.06px;font-size:18.00px;color:#111;letter-spacing:0.013px;">Prioritize Resources</span>
<span id="t62" class="t " style="left:865.70px;top:360.06px;font-size:18.00px;color:#111;letter-spacing:0.689px;">Print/Export…</span>
<span id="t63" class="t " style="left:1357.60px;top:363.28px;font-size:14.20px;color:#111;letter-spacing:-0.070px;">Ctrl+P</span>
<span id="t64" class="t " style="left:866.70px;top:407.76px;font-size:18.00px;color:#111;letter-spacing:0.026px;">Show reading view</span>
<span id="t65" class="t " style="left:1356.60px;top:410.98px;font-size:14.20px;color:#111;letter-spacing:-0.051px;">F11</span>
<span id="t66" class="t " style="left:865.70px;top:455.06px;font-size:18.00px;color:#111;letter-spacing:0.295px;">Duplicate this panel</span>
<span id="t67" class="t " style="left:1357.60px;top:458.28px;font-size:14.20px;color:#111;letter-spacing:0.080px;">Ctrl+Shift+N</span>
<span id="t68" class="t " style="left:865.70px;top:489.86px;font-size:18.00px;color:#111;letter-spacing:0.249px;">Float this panel</span>
<span id="t69" class="t " style="left:1357.60px;top:493.08px;font-size:14.20px;color:#111;letter-spacing:-0.122px;">Ctrl+F11</span>
<span id="t70" class="t " style="left:866.70px;top:541.16px;font-size:18.00px;color:#111;letter-spacing:0.039px;">Copy location as:</span>
<span id="t71" class="t " style="left:865.70px;top:584.76px;font-size:18.00px;color:#111;letter-spacing:0.268px;">Help about this feature</span>
<span id="t72" class="t " style="left:1356.60px;top:587.98px;font-size:14.20px;color:#111;letter-spacing:-1.466px;">F1</span>
<span id="t73" class="t " style="left:865.70px;top:619.16px;font-size:18.00px;color:#111;letter-spacing:0.008px;">Discuss this feature</span>
<span id="t74" class="t " style="left:866.70px;top:654.36px;font-size:18.00px;color:#111;letter-spacing:0.103px;">Show help card</span>
<span id="t75" class="t " style="left:866.70px;top:702.36px;font-size:18.00px;color:#111;letter-spacing:-0.652px;">Close</span>
<span id="t76" class="t " style="left:1357.60px;top:705.58px;font-size:14.20px;color:#111;letter-spacing:-0.136px;">Ctrl+F4</span>
<span id="t77" class="t " style="left:1335.00px;top:544.18px;font-size:14.20px;color:#111;letter-spacing:0.012px;">Ctrl+Alt+C</span>
<div class="a" style="left:1195.2px;top:535.2px;width:28.6px;height:27.2px;border-radius:4px;background:#ececec"></div>
<span id="t78" class="t " style="left:1019.80px;top:543.65px;font-size:14.00px;color:#1a1a1a;letter-spacing:0.740px;-webkit-text-stroke:0.45px #1a1a1a;">URL</span>
<span id="t79" class="t " style="left:1064.50px;top:543.65px;font-size:14.00px;color:#1a1a1a;letter-spacing:1.025px;-webkit-text-stroke:0.45px #1a1a1a;">HTML</span>
<span id="t80" class="t " style="left:1120.00px;top:543.65px;font-size:14.00px;color:#1a1a1a;letter-spacing:2.014px;-webkit-text-stroke:0.45px #1a1a1a;">L4</span>
<span id="t81" class="t " style="left:1153.50px;top:543.65px;font-size:14.00px;color:#1a1a1a;letter-spacing:0.953px;-webkit-text-stroke:0.45px #1a1a1a;">WIKI</span>
<span id="t82" class="t " style="left:1200.40px;top:543.65px;font-size:14.00px;color:#1a1a1a;letter-spacing:0.290px;-webkit-text-stroke:0.45px #1a1a1a;">RL</span>
<span id="t83" class="t " style="left:1232.50px;top:543.65px;font-size:14.00px;color:#1a1a1a;letter-spacing:0.459px;-webkit-text-stroke:0.45px #1a1a1a;">DATA</span>
<svg style="left:1033px;top:624.8px" width="11" height="11" viewBox="0 0 11 11"><g fill="none" stroke="#9a9a9a" stroke-width="1.3"><path d="M4.4 1.4 H0.7 V10.3 H9.6 V6.6"/><path d="M6.2 0.7 H10.3 V4.8 M10.3 0.7 L5 6"/></g></svg>
<div class="a" style="left:837.3px;top:338.8px;width:621.9px;height:60.9px;border:8.1px solid #fd6604;border-radius:24px;box-sizing:border-box"></div>
<div class="a" style="left:1406.2px;top:44.8px;width:54.8px;height:60px;border:8px solid #fd6604;border-radius:20px;box-sizing:border-box;background:#fff"></div>
<svg style="left:0;top:0" width="1464" height="110" viewBox="0 0 1464 110"><g fill="#5d6782"><circle cx="1433.1" cy="66.5" r="2.75"/><circle cx="1433.1" cy="74.9" r="2.75"/><circle cx="1433.1" cy="83.3" r="2.75"/></g></svg>
</body></html>
